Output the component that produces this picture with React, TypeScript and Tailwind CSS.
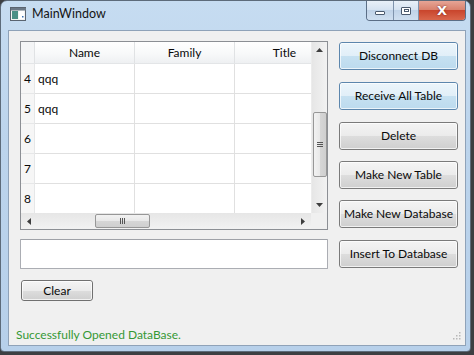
import React from "react";

const font = { fontFamily: "Lato, 'Noto Sans', sans-serif" };

function WinButton({ label, blue }: { label: string; blue?: boolean }) {
  return (
    <div
      className={
        "h-[28px] w-[119px] rounded-[3px] border flex items-center justify-center text-[12px] text-[#0a0a0a] " +
        (blue
          ? "border-[#5c86ad] bg-[linear-gradient(#ecf5fb_0%,#e1eff8_50%,#c6e1f1_51%,#bcdaee_100%)]"
          : "border-[#7a7a7a] bg-[linear-gradient(#f4f4f4_0%,#ebebeb_50%,#dddddd_51%,#cfcfcf_100%)]")
      }
    >
      <div className="w-full h-full rounded-[2px] border border-white/70 flex items-center justify-center">{label}</div>
    </div>
  );
}

const cols = ["Name", "Family", "Title"];
const rows = [
  { n: "4", v: "qqq" },
  { n: "5", v: "qqq" },
  { n: "6", v: "" },
  { n: "7", v: "" },
  { n: "8", v: "" },
];

export default function App() {
  return (
    <div className="w-[474px] h-[355px] bg-[#3d3f42] overflow-hidden" style={font}>
      <div className="w-[471px] h-[352px] rounded-t-[7px] rounded-b-[4px] border border-[#5d6b7a] bg-[linear-gradient(180deg,#c6dcf1_0%,#bcd4ec_40%,#b7d0ea_100%)] flex flex-col">
        {/* title bar */}
        <div className="h-[29px] flex items-start shrink-0">
          <div className="flex items-center h-[26px] pl-[9px] gap-[6px]">
            <svg width="16" height="14" viewBox="0 0 16 14">
              <rect x="0.5" y="0.5" width="15" height="13" fill="#f4f4f4" stroke="#5a6470" />
              <rect x="1" y="1" width="15" height="2.5" fill="#6b7886" />
              <rect x="2" y="4" width="6" height="8" fill="#4c8f86" />
              <rect x="9" y="4" width="5" height="8" fill="#ffffff" />
              <rect x="12" y="9" width="1.5" height="1.5" fill="#3a6fb0" />
            </svg>
            <span className="text-[12.5px] text-[#141414] pt-[1px]">MainWindow</span>
          </div>
          <div className="ml-auto mr-[4px] flex h-[20px] rounded-b-[4px] border border-t-0 border-[#5b6e86] overflow-hidden">
            <div className="w-[27px] h-full bg-[linear-gradient(#e8f0f8_0%,#d6e3f1_45%,#c0d3e8_50%,#cfdff0_100%)] border-r border-[#7f93ac] flex items-center justify-center">
              <div className="w-[10px] h-[4px] mt-[5px] bg-white border border-[#4b5a6e] rounded-[1px]" />
            </div>
            <div className="w-[25px] h-full bg-[linear-gradient(#e8f0f8_0%,#d6e3f1_45%,#c0d3e8_50%,#cfdff0_100%)] border-r border-[#7f93ac] flex items-center justify-center">
              <div className="w-[10px] h-[8px] border border-[#4b5a6e] rounded-[1px] bg-white flex items-center justify-center">
                <div className="w-[5px] h-[3px] border border-[#4b5a6e]" />
              </div>
            </div>
            <div className="w-[46px] h-full bg-[linear-gradient(#e6a596_0%,#d9826e_45%,#c9462d_50%,#d9674c_100%)] flex items-center justify-center">
              <span className="text-white font-bold text-[13px] leading-none" style={{ fontFamily: "'DejaVu Sans', sans-serif", textShadow: "0 0 2px #6a1a10" }}>
                X
              </span>
            </div>
          </div>
        </div>

        {/* client */}
        <div className="ml-[7px] w-[458px] h-[316px] border border-[#8fa2b8] bg-[#f0f0f0] flex flex-col pl-[11px] pt-[10px]">
          <div className="flex">
            <div className="w-[308px] flex flex-col">
              {/* table */}
              <div className="h-[189px] border border-[#8c8f94] bg-white flex flex-col">
                <div className="flex h-[171px]">
                  <div className="w-[290px] overflow-hidden">
                    <div className="flex h-[22px] bg-[linear-gradient(#ffffff_0%,#f7f8f9_60%,#eef0f2_100%)] border-b border-[#e3e5e7]">
                      <div className="w-[14px] shrink-0 border-r border-[#e0e2e4] bg-[#f4f5f6]" />
                      {cols.map((c) => (
                        <div key={c} className="w-[100px] shrink-0 border-r border-[#e0e2e4] flex items-center justify-center text-[12px] text-[#0a0a0a]">
                          {c}
                        </div>
                      ))}
                    </div>
                    {rows.map((r) => (
                      <div key={r.n} className="flex h-[30px]">
                        <div className="w-[14px] shrink-0 border-r border-b border-[#e6e7e8] bg-[#f6f6f6] flex items-center pl-[3px] text-[12px] text-[#0a0a0a]">
                          {r.n}
                        </div>
                        {cols.map((c, i) => (
                          <div key={c} className="w-[100px] shrink-0 border-r border-b border-[#e0e0e0] flex items-center pl-[3px] text-[12px] text-[#0a0a0a]">
                            {i === 0 ? r.v : ""}
                          </div>
                        ))}
                      </div>
                    ))}
                  </div>
                  {/* vertical scrollbar */}
                  <div className="w-[16px] bg-[linear-gradient(90deg,#e6e6e6,#f2f2f2)] flex flex-col items-center border-l border-[#ececec]">
                    <div className="h-[16px] flex items-center justify-center">
                      <svg width="7" height="4" viewBox="0 0 7 4"><path d="M0 4 L3.5 0 L7 4 Z" fill="#3e3e3e" /></svg>
                    </div>
                    <div className="mt-[54px] w-[14px] h-[65px] rounded-[2px] border border-[#979797] bg-[linear-gradient(90deg,#f2f2f2_0%,#e8e8e8_50%,#d6d6d6_51%,#cfcfcf_100%)] flex items-center justify-center">
                      <svg width="6" height="5" viewBox="0 0 6 5">
                        <path d="M0 0.5 H6 M0 2.5 H6 M0 4.5 H6" stroke="#555" strokeWidth="1" />
                      </svg>
                    </div>
                    <div className="mt-auto h-[16px] flex items-center justify-center">
                      <svg width="7" height="4" viewBox="0 0 7 4"><path d="M0 0 L3.5 4 L7 0 Z" fill="#3e3e3e" /></svg>
                    </div>
                  </div>
                </div>
                {/* horizontal scrollbar */}
                <div className="flex h-[16px]">
                  <div className="w-[290px] bg-[linear-gradient(#e6e6e6,#f2f2f2)] flex items-center">
                    <div className="w-[16px] h-full flex items-center justify-center">
                      <svg width="4" height="7" viewBox="0 0 4 7"><path d="M4 0 L0 3.5 L4 7 Z" fill="#3e3e3e" /></svg>
                    </div>
                    <div className="ml-[58px] w-[55px] h-[14px] rounded-[2px] border border-[#979797] bg-[linear-gradient(#f2f2f2_0%,#e8e8e8_50%,#d6d6d6_51%,#cfcfcf_100%)] flex items-center justify-center">
                      <svg width="5" height="6" viewBox="0 0 5 6">
                        <path d="M0.5 0 V6 M2.5 0 V6 M4.5 0 V6" stroke="#555" strokeWidth="1" />
                      </svg>
                    </div>
                    <div className="ml-auto w-[16px] h-full flex items-center justify-center">
                      <svg width="4" height="7" viewBox="0 0 4 7"><path d="M0 0 L4 3.5 L0 7 Z" fill="#3e3e3e" /></svg>
                    </div>
                  </div>
                  <div className="w-[16px] bg-[#f0f0f0]" />
                </div>
              </div>
              {/* input */}
              <div className="mt-[9px] h-[30px] border border-[#abadb3] border-t-[#9fa2a8] bg-white rounded-[1px]" />
              {/* clear */}
              <div className="mt-[11px] ml-[1px] w-[72px] h-[21px] rounded-[3px] border border-[#707070] bg-[linear-gradient(#f4f4f4_0%,#ebebeb_50%,#dddddd_51%,#cfcfcf_100%)] flex items-center justify-center text-[12px] text-[#0a0a0a]">
                <div className="w-full h-full rounded-[2px] border border-white/70 flex items-center justify-center">Clear</div>
              </div>
            </div>
            <div className="ml-[11px] flex flex-col pt-[1px]">
              <WinButton label="Disconnect DB" blue />
              <div className="mt-[12px]"><WinButton label="Receive All Table" blue /></div>
              <div className="mt-[12px]"><WinButton label="Delete" /></div>
              <div className="mt-[11px]"><WinButton label="Make New Table" /></div>
              <div className="mt-[11px]"><WinButton label="Make New Database" /></div>
              <div className="mt-[12px]"><WinButton label="Insert To Database" /></div>
            </div>
          </div>
          <div className="mt-auto mb-[4px] -ml-[4px] flex items-end justify-between pr-[4px]">
            <span className="text-[12px] leading-none text-[#359835]">Successfully Opened DataBase.</span>
            <svg width="8" height="8" viewBox="0 0 8 8" className="mb-[1px]">
              <rect x="6" y="0" width="1.5" height="1.5" fill="#b8b8b8" />
              <rect x="3" y="3" width="1.5" height="1.5" fill="#b8b8b8" />
              <rect x="6" y="3" width="1.5" height="1.5" fill="#b8b8b8" />
              <rect x="0" y="6" width="1.5" height="1.5" fill="#b8b8b8" />
              <rect x="3" y="6" width="1.5" height="1.5" fill="#b8b8b8" />
              <rect x="6" y="6" width="1.5" height="1.5" fill="#b8b8b8" />
            </svg>
          </div>
        </div>
      </div>
    </div>
  );
}
